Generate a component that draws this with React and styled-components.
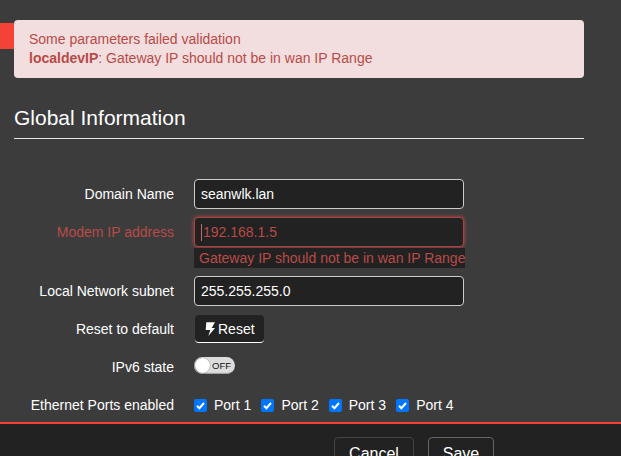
import React from 'react'
import styled, {createGlobalStyle} from 'styled-components'

const GlobalStyle = createGlobalStyle`
  html, body {
    margin: 0;
    height: 100%;
    overflow: hidden;
    background-color: #3c3c3c;
  }
  * {
    box-sizing: border-box;
  }
`

const Page = styled.div`
  display: flex;
  flex-direction: column;
  width: 621px;
  height: 456px;
  overflow: hidden;
  background-color: #3c3c3c;
  color: #fff;
  font-family: 'Liberation Sans', Arial, sans-serif;
  font-size: 14px;
`

const AlertRow = styled.div`
  display: flex;
  align-items: flex-start;
  margin-top: 20px;
`

const RedTab = styled.div`
  width: 14px;
  height: 26px;
  margin-top: 3px;
  background-color: #f44336;
`

const Alert = styled.div`
  width: 570px;
  height: 58px;
  padding: 10px 15px;
  line-height: 19px;
  border-radius: 4px;
  background-color: #f2dede;
  color: #b94a48;
`

const Content = styled.div`
  display: flex;
  flex-direction: column;
  width: 570px;
  margin-left: 14px;
`

const Title = styled.h2`
  margin: 28px 0 0;
  height: 33px;
  font-size: 21px;
  line-height: 24px;
  font-weight: 400;
  border-bottom: 1px solid #e5e5e5;
`

const Form = styled.div`
  display: flex;
  flex-direction: column;
  margin-top: 40px;
`

const Row = styled.div`
  display: grid;
  grid-template-columns: 160px 1fr;
  column-gap: 20px;
  align-items: center;
  margin-bottom: ${({gap}) => gap || 8}px;
`

const Label = styled.label`
  text-align: right;
  color: ${({error}) => (error ? '#b94a48' : '#fff')};
`

const Input = styled.div`
  display: flex;
  align-items: center;
  width: 270px;
  height: 30px;
  padding: 0 6px;
  border-radius: 4px;
  border: 1px solid ${({error}) => (error ? '#a94442' : '#ccc')};
  background-color: #222;
  color: ${({error}) => (error ? '#b94a48' : '#fff')};
  box-shadow: ${({error}) => (error ? '0 0 4px #b94a48' : 'none')};
`

const Caret = styled.span`
  width: 1px;
  height: 17px;
  margin-right: 1px;
  background-color: #c46a68;
`

const HelpText = styled.div`
  width: 271px;
  height: 20px;
  margin-top: 1px;
  padding-left: 5px;
  line-height: 20px;
  white-space: nowrap;
  background-color: #222;
  color: #b94a48;
`

const ResetButton = styled.button`
  display: flex;
  align-items: center;
  gap: 3px;
  width: 69px;
  height: 28px;
  margin-left: 1px;
  padding: 0 0 0 10px;
  border: none;
  border-bottom: 1px solid #fff;
  border-radius: 4px;
  background-color: #222;
  color: #fff;
  font: inherit;
`

const ToggleRow = styled(Row)`
  height: 20px;
`

const Toggle = styled.div`
  position: relative;
  display: flex;
  align-self: start;
  align-items: center;
  width: 41px;
  height: 17px;
  padding: 0 0 1px 18px;
  border-radius: 9px;
  background-color: #ddd;
  box-shadow: inset 1px -1px 1px #999;
  color: #111;
  font-size: 9.5px;
`

const Knob = styled.span`
  position: absolute;
  left: 1px;
  top: 1px;
  width: 15px;
  height: 15px;
  border-radius: 50%;
  background-color: #fff;
  box-shadow: 0 0 1px #555;
`

const Ports = styled.div`
  display: flex;
  align-items: center;
`

const Port = styled.label`
  display: flex;
  align-items: center;
  margin-right: 10px;
`

const Check = styled.span`
  display: flex;
  align-items: center;
  justify-content: center;
  width: 13px;
  height: 13px;
  margin-right: 7px;
  border-radius: 2px;
  background-color: #0075ff;
`

const Footer = styled.div`
  display: flex;
  justify-content: flex-start;
  gap: 14px;
  height: 34px;
  margin-top: auto;
  padding: 13px 0 0 334px;
  border-top: 2px solid #f44336;
  background-color: #222;
`

const FooterButton = styled.button`
  flex: none;
  width: ${({width}) => width}px;
  height: 34px;
  padding: 0;
  border: 1px solid ${({primary}) => (primary ? '#666' : '#444')};
  border-radius: 4px;
  background-color: #222;
  color: #fff;
  font-family: inherit;
  font-size: 16px;
`

const Bolt = () => (
  <svg width="10" height="14" viewBox="0 0 10 14">
    <path d="M1.3.3H10L6.7 6H10L3.3 14 5.3 8H.7z" fill="#fff" />
  </svg>
)

const Tick = () => (
  <svg width="11" height="11" viewBox="0 0 11 11">
    <path d="M2 5.8l2.4 2.4L9 3" fill="none" stroke="#fff" strokeWidth="2" />
  </svg>
)

export default function App() {
  return (
    <Page>
      <GlobalStyle />
      <AlertRow>
        <RedTab />
        <Alert>
          Some parameters failed validation
          <br />
          <b>localdevIP</b>: Gateway IP should not be in wan IP Range
        </Alert>
      </AlertRow>
      <Content>
        <Title>Global Information</Title>
        <Form>
          <Row>
            <Label>Domain Name</Label>
            <Input>seanwlk.lan</Input>
          </Row>
          <Row>
            <Label error>Modem IP address</Label>
            <Input error>
              <Caret />
              192.168.1.5
            </Input>
            <span />
            <HelpText>Gateway IP should not be in wan IP Range</HelpText>
          </Row>
          <Row gap={9}>
            <Label>Local Network subnet</Label>
            <Input>255.255.255.0</Input>
          </Row>
          <Row gap={14}>
            <Label>Reset to default</Label>
            <ResetButton>
              <Bolt />
              Reset
            </ResetButton>
          </Row>
          <ToggleRow gap={20}>
            <Label>IPv6 state</Label>
            <Toggle>
              <Knob />
              OFF
            </Toggle>
          </ToggleRow>
          <Row gap={0}>
            <Label>Ethernet Ports enabled</Label>
            <Ports>
              {[1, 2, 3, 4].map((n) => (
                <Port key={n}>
                  <Check>
                    <Tick />
                  </Check>
                  Port {n}
                </Port>
              ))}
            </Ports>
          </Row>
        </Form>
      </Content>
      <Footer>
        <FooterButton width={80}>Cancel</FooterButton>
        <FooterButton width={66} primary>
          Save
        </FooterButton>
      </Footer>
    </Page>
  )
}
